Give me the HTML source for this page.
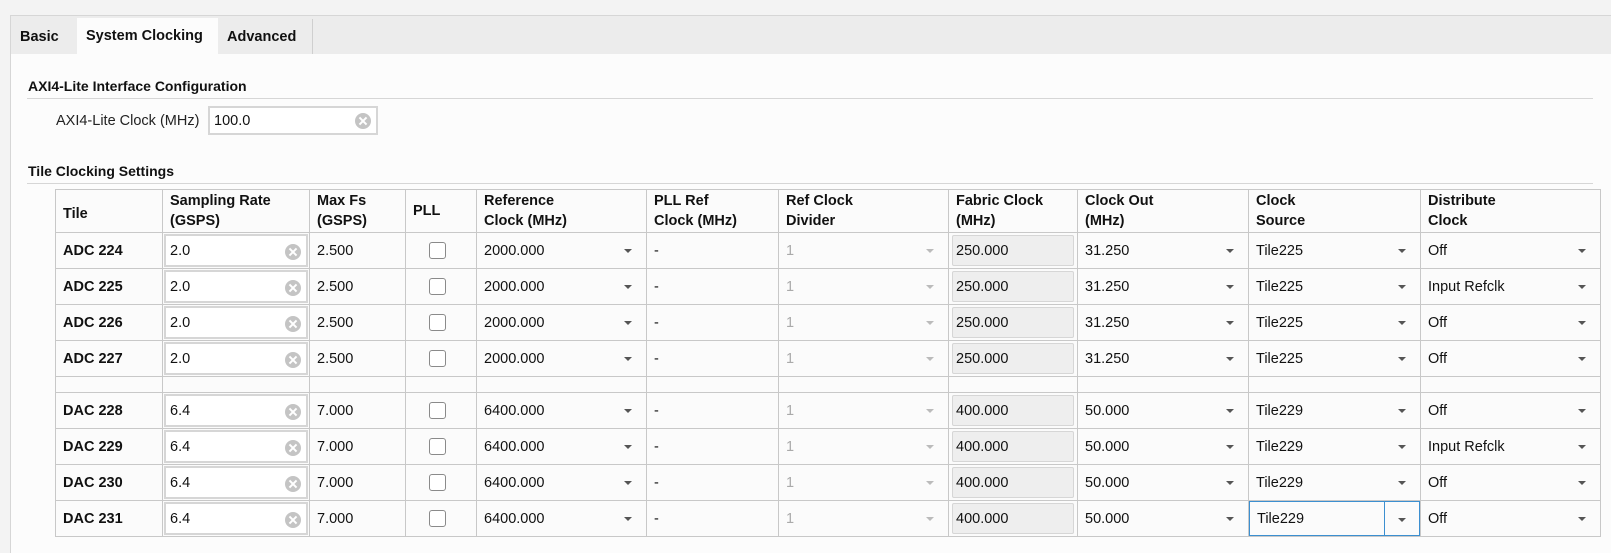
<!DOCTYPE html>
<html><head><meta charset="utf-8"><style>
*{box-sizing:border-box;margin:0;padding:0}
body{width:1611px;height:553px;overflow:hidden;background:#f3f3f3;font-family:"Liberation Sans",sans-serif;font-size:14px;color:#111;position:relative}
.panel{position:absolute;left:10px;top:15px;width:1601px;height:538px;background:#fcfcfc;border-left:1px solid #d6d6d6;border-top:1px solid #d6d6d6}
.tabbar{position:absolute;left:11px;top:16px;width:1600px;height:38px;background:#ececec}
.tab{position:absolute;top:3px;height:35px;line-height:37px;font-weight:bold;font-size:14.5px;padding-left:9px}
.sel{background:#fcfcfc}
.h{position:absolute;left:28px;font-weight:bold;font-size:14px}
.line{position:absolute;left:27px;right:18px;height:1px;background:#d6d6d6}
.lbl{position:absolute;left:56px;top:113px;font-size:14.5px;color:#222}
.inp{position:absolute;left:208px;top:106px;width:170px;height:29px;border:2px solid #d6d6d6;background:#fff;padding-left:4px;line-height:26px;font-size:14.5px}
.x{position:absolute;width:16px;height:16px;border-radius:50%;background:#c4c4c4}
.x:before,.x:after{content:"";position:absolute;left:7px;top:3px;width:2px;height:10px;background:#fff;transform:rotate(45deg)}
.x:after{transform:rotate(-45deg)}
table{position:absolute;left:55px;top:189px;border-collapse:collapse;table-layout:fixed;width:1545px}
td,th{border:1px solid #c8c8c8;height:36px;padding:0 0 0 7px;text-align:left;white-space:nowrap;position:relative;background:#fbfbfb;font-size:14.5px}
th{height:43px;font-weight:bold;line-height:20px;vertical-align:middle;font-size:14.5px}
td.b{font-weight:bold}
tr.sp td{height:16px}
.ti{position:absolute;left:1px;top:1px;right:1px;bottom:1px;border:2px solid #d6d6d6;background:#fff;padding-left:4px;line-height:31px}
.ti .x{right:5px;top:8px}
.cb{display:block;margin:0 auto 0 16px;width:17px;height:17px;border:1.5px solid #8a8a8a;border-radius:3px;background:#fff}
.dd:after{content:"";position:absolute;right:14px;top:16px;border-left:4px solid transparent;border-right:4px solid transparent;border-top:4px solid #555}
.dis{color:#aaa}.dis:after{border-top-color:#bbb}
.fab{position:absolute;left:3px;top:2px;right:3px;bottom:2px;background:#eeeeee;border:1.5px solid #d6d6d6;border-radius:2px;padding-left:3px;line-height:31px}
.foc{position:absolute;left:0;top:0;right:0;bottom:0;border:1px solid #3c8fd0;padding-left:7px;line-height:34px}
.foc:before{content:"";position:absolute;right:34px;top:0;bottom:0;width:1px;background:#3c8fd0}
.foc:after{content:"";position:absolute;right:13px;top:16px;border-left:4px solid transparent;border-right:4px solid transparent;border-top:4px solid #555}
</style></head><body>
<div class="panel"></div>
<div class="tabbar">
<div class="tab" style="left:0;width:66px">Basic</div>
<div class="tab sel" style="left:66px;width:141px;top:2px;height:36px">System Clocking</div>
<div class="tab" style="left:207px;width:95px;border-right:1px solid #cfcfcf">Advanced</div>
</div>
<div class="h" style="top:78px">AXI4-Lite Interface Configuration</div>
<div class="line" style="top:98px"></div>
<div class="lbl">AXI4-Lite Clock (MHz)</div>
<div class="inp">100.0<div class="x" style="right:5px;top:5px"></div></div>
<div class="h" style="top:163px">Tile Clocking Settings</div>
<div class="line" style="top:183px"></div>
<table>
<colgroup><col style="width:107px"><col style="width:147px"><col style="width:96px"><col style="width:71px"><col style="width:170px"><col style="width:132px"><col style="width:170px"><col style="width:129px"><col style="width:171px"><col style="width:172px"><col style="width:180px"></colgroup>
<tr><th style="padding-top:6px">Tile</th><th>Sampling Rate<br>(GSPS)</th><th>Max Fs<br>(GSPS)</th><th>PLL</th><th>Reference<br>Clock (MHz)</th><th>PLL Ref<br>Clock (MHz)</th><th>Ref Clock<br>Divider</th><th>Fabric Clock<br>(MHz)</th><th>Clock Out<br>(MHz)</th><th>Clock<br>Source</th><th>Distribute<br>Clock</th></tr>
<tr><td class="b">ADC 224</td><td><div class="ti">2.0<div class="x"></div></div></td><td>2.500</td><td><span class="cb"></span></td><td class="dd">2000.000</td><td>-</td><td class="dd dis">1</td><td><div class="fab">250.000</div></td><td class="dd">31.250</td><td class="dd">Tile225</td><td class="dd">Off</td></tr>
<tr><td class="b">ADC 225</td><td><div class="ti">2.0<div class="x"></div></div></td><td>2.500</td><td><span class="cb"></span></td><td class="dd">2000.000</td><td>-</td><td class="dd dis">1</td><td><div class="fab">250.000</div></td><td class="dd">31.250</td><td class="dd">Tile225</td><td class="dd">Input Refclk</td></tr>
<tr><td class="b">ADC 226</td><td><div class="ti">2.0<div class="x"></div></div></td><td>2.500</td><td><span class="cb"></span></td><td class="dd">2000.000</td><td>-</td><td class="dd dis">1</td><td><div class="fab">250.000</div></td><td class="dd">31.250</td><td class="dd">Tile225</td><td class="dd">Off</td></tr>
<tr><td class="b">ADC 227</td><td><div class="ti">2.0<div class="x"></div></div></td><td>2.500</td><td><span class="cb"></span></td><td class="dd">2000.000</td><td>-</td><td class="dd dis">1</td><td><div class="fab">250.000</div></td><td class="dd">31.250</td><td class="dd">Tile225</td><td class="dd">Off</td></tr>
<tr class="sp"><td></td><td></td><td></td><td></td><td></td><td></td><td></td><td></td><td></td><td></td><td></td></tr>
<tr><td class="b">DAC 228</td><td><div class="ti">6.4<div class="x"></div></div></td><td>7.000</td><td><span class="cb"></span></td><td class="dd">6400.000</td><td>-</td><td class="dd dis">1</td><td><div class="fab">400.000</div></td><td class="dd">50.000</td><td class="dd">Tile229</td><td class="dd">Off</td></tr>
<tr><td class="b">DAC 229</td><td><div class="ti">6.4<div class="x"></div></div></td><td>7.000</td><td><span class="cb"></span></td><td class="dd">6400.000</td><td>-</td><td class="dd dis">1</td><td><div class="fab">400.000</div></td><td class="dd">50.000</td><td class="dd">Tile229</td><td class="dd">Input Refclk</td></tr>
<tr><td class="b">DAC 230</td><td><div class="ti">6.4<div class="x"></div></div></td><td>7.000</td><td><span class="cb"></span></td><td class="dd">6400.000</td><td>-</td><td class="dd dis">1</td><td><div class="fab">400.000</div></td><td class="dd">50.000</td><td class="dd">Tile229</td><td class="dd">Off</td></tr>
<tr><td class="b">DAC 231</td><td><div class="ti">6.4<div class="x"></div></div></td><td>7.000</td><td><span class="cb"></span></td><td class="dd">6400.000</td><td>-</td><td class="dd dis">1</td><td><div class="fab">400.000</div></td><td class="dd">50.000</td><td><div class="foc">Tile229</div></td><td class="dd">Off</td></tr>
</table>
</body></html>
